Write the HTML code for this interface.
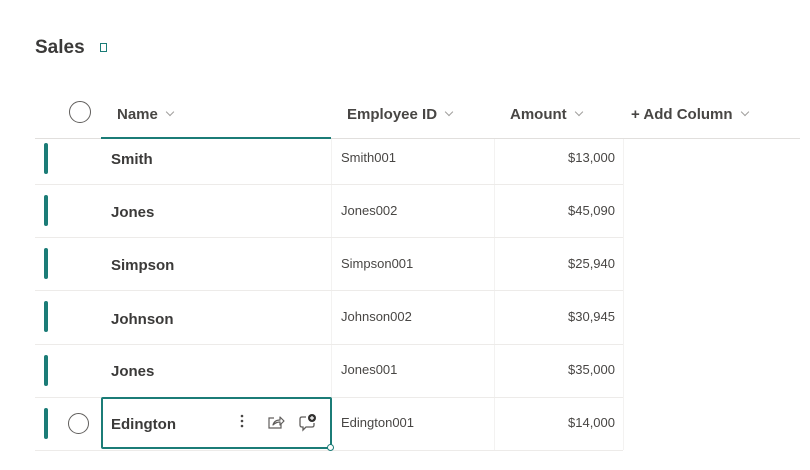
<!DOCTYPE html>
<html><head><style>
*{margin:0;padding:0;box-sizing:border-box}
body{width:810px;height:470px;background:#fff;font-family:"Liberation Sans",sans-serif;color:#323130;position:relative;overflow:hidden}
.a{position:absolute}
.h{font-size:15px;font-weight:bold;color:#484644;top:106px}
.chev{display:inline-block;width:6px;height:6px;border-right:1px solid #a19f9d;border-bottom:1px solid #a19f9d;transform:rotate(45deg);margin-left:9px;position:relative;top:-4px}
.bar{left:44px;width:4px;height:31px;background:#1b7c77;border-radius:2px}
.nm{left:111px;font-size:15px;font-weight:bold;color:#3b3a39}
.id{left:341px;font-size:13px;color:#484644}
.am{left:500px;width:115px;text-align:right;font-size:13px;color:#484644}
.sep{left:35px;width:588px;height:1px;background:#edebe9}
.vl{width:1px;background:#f3f2f1}
</style></head><body>
<div class="a" style="left:35px;top:37px;font-size:19px;font-weight:bold;color:#3b3a39">Sales</div>
<div class="a" style="left:100px;top:43px;width:7px;height:9px;border:1px solid #1b7c77"></div>

<div class="a" style="left:69px;top:101px;width:22px;height:22px;border:1.5px solid #605e5c;border-radius:50%"></div>
<div class="a h" style="left:117px">Name<span class="chev"></span></div>
<div class="a h" style="left:347px">Employee ID<span class="chev"></span></div>
<div class="a h" style="left:510px">Amount<span class="chev"></span></div>
<div class="a h" style="left:631px">+ Add Column<span class="chev"></span></div>
<div class="a" style="left:35px;top:138px;width:765px;height:1px;background:#e1dfdd"></div>
<div class="a" style="left:101px;top:137px;width:230px;height:2px;background:#1b7c77"></div>

<div class="a vl" style="left:331px;top:139px;height:311px"></div>
<div class="a vl" style="left:494px;top:139px;height:311px"></div>
<div class="a vl" style="left:623px;top:139px;height:311px"></div>

<div class="a sep" style="top:184px"></div>
<div class="a sep" style="top:237px"></div>
<div class="a sep" style="top:290px"></div>
<div class="a sep" style="top:344px"></div>
<div class="a sep" style="top:397px"></div>
<div class="a sep" style="top:450px"></div>

<div class="a bar" style="top:143px"></div>
<div class="a bar" style="top:195px"></div>
<div class="a bar" style="top:248px"></div>
<div class="a bar" style="top:301px"></div>
<div class="a bar" style="top:355px"></div>
<div class="a bar" style="top:408px"></div>

<div class="a nm" style="top:151px">Smith</div>
<div class="a nm" style="top:204px">Jones</div>
<div class="a nm" style="top:257px">Simpson</div>
<div class="a nm" style="top:311px">Johnson</div>
<div class="a nm" style="top:363px">Jones</div>
<div class="a nm" style="top:416px">Edington</div>

<div class="a id" style="top:150px">Smith001</div>
<div class="a id" style="top:203px">Jones002</div>
<div class="a id" style="top:256px">Simpson001</div>
<div class="a id" style="top:309px">Johnson002</div>
<div class="a id" style="top:362px">Jones001</div>
<div class="a id" style="top:415px">Edington001</div>

<div class="a am" style="top:150px">$13,000</div>
<div class="a am" style="top:203px">$45,090</div>
<div class="a am" style="top:256px">$25,940</div>
<div class="a am" style="top:309px">$30,945</div>
<div class="a am" style="top:362px">$35,000</div>
<div class="a am" style="top:415px">$14,000</div>

<div class="a" style="left:68px;top:413px;width:21px;height:21px;border:1.5px solid #605e5c;border-radius:50%"></div>
<div class="a" style="left:101px;top:397px;width:231px;height:52px;border:2px solid #1b7c77;border-radius:2px"></div>
<div class="a" style="left:327px;top:444px;width:7px;height:7px;border:1px solid #1b7c77;background:#fff;border-radius:50%"></div>
<svg class="a" style="left:236px;top:413px" width="90" height="20" viewBox="0 0 90 20">
<circle cx="6" cy="3" r="1.3" fill="#484644"/><circle cx="6" cy="8" r="1.3" fill="#484644"/><circle cx="6" cy="13" r="1.3" fill="#484644"/>
<path d="M38 5 H33 V15 H45 V11" fill="none" stroke="#605e5c" stroke-width="1.2"/>
<path d="M37 12 C38 8 41 7 44 7 V4 L48 8 L44 12 V9 C41 9 39 10 37 12Z" fill="none" stroke="#605e5c" stroke-width="1.2" stroke-linejoin="round"/>
<path d="M70 4 H66 Q64 4 64 6 V12 Q64 14 66 14 H67 V17 L70 14 H76 Q78 14 78 12 V10" fill="none" stroke="#605e5c" stroke-width="1.3"/>
<circle cx="76" cy="5" r="4" fill="#323130"/><path d="M76 3 V7 M74 5 H78" stroke="#fff" stroke-width="1.2"/>
</svg>
</body></html>
